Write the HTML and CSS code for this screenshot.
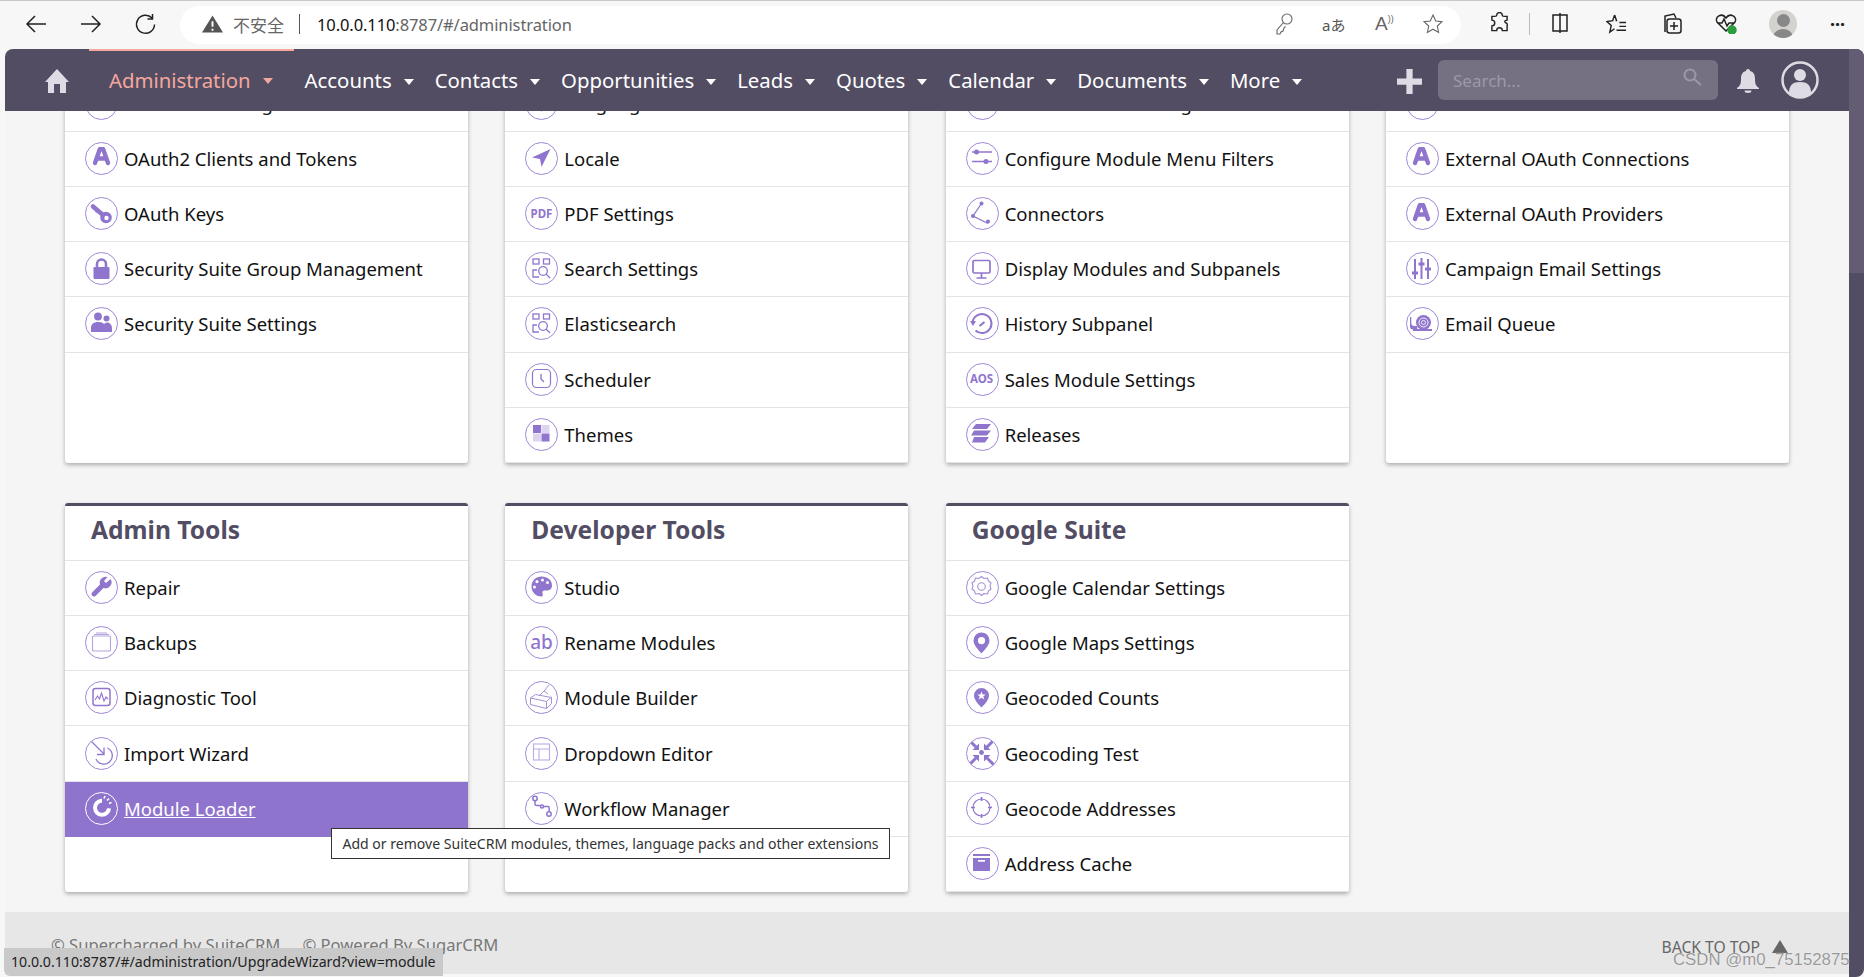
FILE: index.html
```html
<!DOCTYPE html>
<html lang="en">
<head>
<meta charset="utf-8">
<title>Administration</title>
<link rel="stylesheet" href="styles.css">
</head>
<body>
<svg class="defs" aria-hidden="true">
  <symbol id="i-a" viewBox="0 0 33 33"><path d="M10 22 14.800 8.200h3.400L23 22M12.500 17.500h8" fill="none" stroke="currentColor" stroke-width="4.400" stroke-linecap="round" stroke-linejoin="round"/></symbol>
  <symbol id="i-key" viewBox="0 0 33 33"><path d="M8 9.500 18 18" fill="none" stroke="currentColor" stroke-width="4.500" stroke-linecap="round"/><path d="M7 12.500h3.500v3h3v-3z" fill="currentColor"/><circle cx="21" cy="20.500" r="5.800" fill="currentColor"/><circle cx="21.500" cy="21" r="2.200" fill="#fff"/></symbol>
  <symbol id="i-lock" viewBox="0 0 33 33"><rect x="8.500" y="15" width="16" height="12" rx="1.200" fill="currentColor"/><path d="M12 16v-4a4.500 4.500 0 0 1 9 0v4" fill="none" stroke="currentColor" stroke-width="2.600"/></symbol>
  <symbol id="i-people" viewBox="0 0 33 33"><circle cx="13" cy="9.500" r="3.900" fill="currentColor"/><circle cx="21.500" cy="11.500" r="3" fill="currentColor"/><path d="M6 25v-4c0-4 3-6 7-6s5 1 6 2c1-1 2-1.500 3-1.500 3 0 5 2.500 5 5.500v4z" fill="currentColor"/></symbol>
  <symbol id="i-locale" viewBox="0 0 33 33"><path d="M25.500 8 7 16.500l8 1.500 1.500 8z" fill="currentColor"/></symbol>
  <symbol id="i-qr" viewBox="0 0 33 33"><g fill="none" stroke="currentColor" stroke-width="1.300"><rect x="8" y="7" width="6" height="5"/><rect x="18.500" y="7" width="6" height="5"/><path d="M14 25H8v-7h4"/><circle cx="18" cy="19" r="4.300"/><path d="m21 22 4 4"/></g></symbol>
  <symbol id="i-clock" viewBox="0 0 33 33"><g fill="none" stroke="currentColor" stroke-width="1.200"><rect x="7.500" y="7.500" width="18" height="18" rx="4"/><path d="M16 12v5l3 3" stroke-width="1.400"/></g></symbol>
  <symbol id="i-themes" viewBox="0 0 33 33"><path d="M8 8h8v8H8zM16.500 16.500h8v8h-8z" fill="currentColor"/><path d="M16.500 8h8v8h-8zM8 16.500h8v8H8z" fill="currentColor" opacity=".3"/></symbol>
  <symbol id="i-filter" viewBox="0 0 33 33"><g stroke="currentColor" stroke-width="1.500"><path d="M7 11h20M7 20.500h20"/></g><circle cx="11.500" cy="11" r="2.500" fill="currentColor"/><circle cx="21" cy="20.500" r="2.500" fill="currentColor"/></symbol>
  <symbol id="i-conn" viewBox="0 0 33 33"><path d="M16.500 6.500 8 19l15 7.500" fill="none" stroke="currentColor" stroke-width="1.300"/><circle cx="16.500" cy="6.500" r="2" fill="currentColor"/><circle cx="8" cy="19" r="2" fill="currentColor"/><circle cx="23" cy="24.500" r="2" fill="currentColor"/></symbol>
  <symbol id="i-monitor" viewBox="0 0 33 33"><g fill="none" stroke="currentColor" stroke-width="1.700"><rect x="8" y="8.500" width="17" height="12.500" rx="1.500"/><path d="M16.500 21v5M11.500 26h10"/></g></symbol>
  <symbol id="i-history" viewBox="0 0 33 33"><g fill="none" stroke="currentColor" stroke-width="2"><path d="M7.500 16a9.500 9.500 0 1 1 3 7.500"/><path d="m14.500 19 5-4" stroke-width="2.200"/></g><path d="M5 14h6l-3 5z" fill="currentColor"/></symbol>
  <symbol id="i-layers" viewBox="0 0 33 33"><path d="M11 7h15l-4 5H7zM9 13.500h17l-4 5H6zM9 20h15l-4 5.500H7z" fill="currentColor"/></symbol>
  <symbol id="i-wrench" viewBox="0 0 33 33"><path d="M25.500 9 21 13l-2-2 3.500-4a6 6 0 0 0-7.500 7.500L7 22.500a2.500 2.500 0 0 0 3.500 3.500l8-8A6 6 0 0 0 25.500 9z" fill="currentColor"/></symbol>
  <symbol id="i-backup" viewBox="0 0 33 33"><g fill="none" stroke="currentColor" stroke-width="1.100" opacity=".65"><rect x="7.500" y="10" width="18" height="15" rx="1"/><path d="M9 8.500h15M11 7h11"/></g></symbol>
  <symbol id="i-diag" viewBox="0 0 33 33"><g fill="none" stroke="currentColor"><rect x="8" y="7.500" width="17" height="17" rx="2.500" stroke-width="1.500"/><path d="m10 19 2.500-4 2 3 2-6 2.500 8 2-4 2 2" stroke-width="1.100"/></g></symbol>
  <symbol id="i-import" viewBox="0 0 33 33"><g fill="none" stroke="currentColor" stroke-width="1.300"><path d="m6 5 13 13"/><path d="M19 11.500v7h-7"/><path d="M22.500 12a8.500 8.500 0 1 1-11.500 11"/></g></symbol>
  <symbol id="i-loader" viewBox="0 0 33 33"><path d="M17 9.800a7 7 0 1 0 7 7.500" fill="none" stroke="currentColor" stroke-width="4"/><path d="M19 7.500l1-2.500M22 9.500l2-2M24 12.500l2.500-1" stroke="currentColor" stroke-width="1.600"/></symbol>
  <symbol id="i-palette" viewBox="0 0 33 33"><path fill-rule="evenodd" d="M16.500 6.500c6 0 10.500 3.500 10.500 9 0 4-3 5-5.500 5h-2c-1.500 0-2.500 1-2 2.500.5 1.500.5 3.500-1 3.500-6 0-10-4.500-10-10 0-6 4.500-10 10-10zM12 10a1.600 1.600 0 1 0 0 3.200 1.600 1.600 0 0 0 0-3.200zM17.500 8.500a1.500 1.500 0 1 0 0 3 1.500 1.500 0 0 0 0-3zM22.500 11a1.500 1.500 0 1 0 0 3 1.500 1.500 0 0 0 0-3zM9.500 15.500a1.500 1.500 0 1 0 0 3 1.500 1.500 0 0 0 0-3z" fill="currentColor"/></symbol>
  <symbol id="i-builder" viewBox="0 0 33 33"><g fill="none" stroke="currentColor" stroke-width="1" opacity=".8"><path d="M5.500 17v6.500l16 4 5-5v-6l-16-3zM5.500 17l16 3.500 5-4.500M21.500 20.500v7"/><path d="m14 15 5-5 4 3M19 10l5-6"/></g></symbol>
  <symbol id="i-table" viewBox="0 0 33 33"><g fill="none" stroke="currentColor" stroke-width="1.100" opacity=".6"><rect x="8.500" y="8" width="16" height="16"/><path d="M8.500 13h16M14 13v11"/></g></symbol>
  <symbol id="i-flow" viewBox="0 0 33 33"><g fill="none" stroke="currentColor" stroke-width="1.500"><circle cx="10" cy="7.500" r="2.200"/><circle cx="24" cy="23" r="2.200"/><circle cx="17" cy="15.500" r="1.500"/><path d="M10 10v3c0 1 .5 1.500 1.500 1.500h4M18.500 15.500H23c1 0 1.200.5 1.200 1.500v3.800"/></g></symbol>
  <symbol id="i-gear" viewBox="0 0 33 33"><g fill="none" stroke="currentColor" stroke-width="1.100" stroke-linejoin="round" opacity=".8"><path d="M16.500 6.500 19 8.500l3.500-.5 1 3 2.500 2-1 3 1 3-2.500 2-1 3-3.500-.5-2.500 2-2.500-2-3.500.5-1-3-2.500-2 1-3-1-3 2.500-2 1-3 3.500.5z"/><circle cx="16.500" cy="16.500" r="3.800"/></g></symbol>
  <symbol id="i-pin" viewBox="0 0 33 33"><path fill-rule="evenodd" d="M16.500 6.500a8 8 0 0 1 8 8c0 4.500-5 9.500-8 13-3-3.500-8-8.500-8-13a8 8 0 0 1 8-8zm0 4.500a3.600 3.600 0 1 0 0 7.200 3.600 3.600 0 0 0 0-7.200z" fill="currentColor"/></symbol>
  <symbol id="i-pinstar" viewBox="0 0 33 33"><path fill-rule="evenodd" d="M16.500 7a7.500 7.500 0 0 1 7.500 7.500c0 4-4.500 9-7.500 12-3-3-7.500-8-7.500-12A7.500 7.500 0 0 1 16.500 7zm0 3.500-1.200 3h-3l2.400 2-1 3 2.800-1.700 2.800 1.700-1-3 2.400-2h-3z" fill="currentColor"/></symbol>
  <symbol id="i-arrows" viewBox="0 0 33 33"><circle cx="16.500" cy="16.500" r="2.400" fill="currentColor"/><g stroke="currentColor" stroke-width="3"><path d="M4 4l7 7M29 4l-7 7M4 29l7-7M29 29l-7-7"/></g><g fill="currentColor"><path d="M14 14V7.500L7.500 14zM19 14v-6.500l6.500 6.500zM14 19v6.500L7.500 19zM19 19v6.500l6.500-6.500z"/></g></symbol>
  <symbol id="i-target" viewBox="0 0 33 33"><circle cx="16.500" cy="16.500" r="8.500" fill="none" stroke="currentColor" stroke-width="1.200"/><path d="M16.500 6v4M16.500 23v4M6 16.500h4M23 16.500h4" stroke="currentColor" stroke-width="1.600"/></symbol>
  <symbol id="i-archive" viewBox="0 0 33 33"><path d="M8 8h17v2H8zM8 12h17v13H8z" fill="currentColor"/><rect x="13" y="14" width="7" height="1.700" fill="#fff"/></symbol>
  <symbol id="i-sliders" viewBox="0 0 33 33"><g stroke="currentColor" stroke-width="2"><path d="M10 7v20M16.500 6v21M23 7v20"/><path d="M7 21h6M13.500 12h6M20 17h6" stroke-width="3"/></g></symbol>
  <symbol id="i-snail" viewBox="0 0 33 33"><path d="M5 10h1.300v6q0 3 3 3h3v3.500H8q-3 0-3-3zM8 22h19v2H8z" fill="currentColor"/><circle cx="18.500" cy="15.500" r="7.500" fill="currentColor"/><circle cx="18.500" cy="15.500" r="4.500" fill="none" stroke="#fff" stroke-width=".9"/><circle cx="18.500" cy="15.500" r="2" fill="none" stroke="#fff" stroke-width=".8"/></symbol>
  <symbol id="i-inbox" viewBox="0 0 33 33"><path d="M8 9h17v16H8z" fill="currentColor"/></symbol>
</svg>

<div class="app">
  <header class="browser">
    <svg class="tool tool-back" viewBox="0 0 22 20"><path d="M21 10H2M10 2l-8 8 8 8"/></svg>
    <svg class="tool tool-fwd" viewBox="0 0 22 20"><path d="M1 10h19M12 2l8 8-8 8"/></svg>
    <svg class="tool tool-reload" viewBox="0 0 22 22"><path d="M18 5a9 9 0 1 0 2.500 6.500M18.500 1v5h-5"/></svg>
    <div class="address">
      <svg class="warn" viewBox="0 0 22 18"><path d="M11 0 22 18H0z"/><path class="warn-mark" d="M11 6v6M11 14v2"/></svg>
      <span class="insecure">不安全</span>
      <span class="addr-sep"></span>
      <span class="url"><b>10.0.0.110</b>:8787/#/administration</span>
      <span class="addr-tools">
        <svg class="tool thin tool-key" viewBox="0 0 18 22"><circle cx="12" cy="6" r="5"/><path d="M8.500 9.500 2 17v4h3l1-2 2-1 1-3 1.500-1.500"/></svg>
        <span class="aa">aあ</span>
        <span class="ra">A<i>))</i></span>
        <svg class="tool thin tool-star" viewBox="0 0 22 22"><path d="m11 2 2.700 6 6.300.7-4.700 4.300 1.300 6.500L11 16.200 5.400 19.500 6.700 13 2 8.700 8.300 8z"/></svg>
      </span>
    </div>
    <div class="ext-tools">
      <svg class="tool ext-puzzle" viewBox="0 0 20 22"><path d="M7 3a3 3 0 0 1 6 0c0 1 2 1 5 1v4c-3 0-3 2-1 3s1 3 1 3v5h-5c0-2-1-3-3-3s-3 1-3 3H2v-5c2 0 3-1 3-3S4 8 2 8V4c3 0 5 0 5-1z"/></svg>
      <span class="ext-sep"></span>
      <svg class="tool ext-split" viewBox="0 0 20 20"><path d="M3 2h14v16H3zM10 0v20"/></svg>
      <svg class="tool ext-fav" viewBox="0 0 22 22"><path d="m9 2 2 6h-1M9 2 7 8 1 9l4.500 4L4 20l5-3.500M14 10h7M14 14h7M11 18h10"/></svg>
      <svg class="tool ext-coll" viewBox="0 0 22 22"><path d="M5 20V4l9-2 2 4"/><rect x="7" y="7" width="14" height="14" rx="2.500"/><path d="M14 10v8M10 14h8"/></svg>
      <svg class="tool ext-heart" viewBox="0 0 22 22"><path d="M11 19 2 10c-3-5 5-10 9-4 4-6 12-1 9 4zM2 11h5l2-4 3 7 2-3h6"/><circle class="ok" cx="17" cy="18" r="4"/></svg>
      <span class="profile"><span class="profile-head"></span><span class="profile-body"></span></span>
      <span class="dots">···</span>
    </div>
  </header>

  <div class="window">
    <div class="site">
      <nav class="topnav">
        <svg class="home" viewBox="0 0 24 24"><path d="M12 0 24 13h-3v11h-6v-9H9v9H3V13H0z"/></svg>
        <ul class="menu">
          <li class="menu-item active">Administration<span class="caret"></span></li>
          <li class="menu-item">Accounts<span class="caret"></span></li>
          <li class="menu-item">Contacts<span class="caret"></span></li>
          <li class="menu-item">Opportunities<span class="caret"></span></li>
          <li class="menu-item">Leads<span class="caret"></span></li>
          <li class="menu-item">Quotes<span class="caret"></span></li>
          <li class="menu-item">Calendar<span class="caret"></span></li>
          <li class="menu-item">Documents<span class="caret"></span></li>
          <li class="menu-item">More<span class="caret"></span></li>
        </ul>
        <svg class="plus" viewBox="0 0 24 24"><path d="M9 0h6v9h9v6h-9v9H9v-9H0V9h9z"/></svg>
        <div class="search">
          <span class="search-text">Search...</span>
          <svg class="search-icon" viewBox="0 0 21 18"><circle cx="7" cy="7" r="5.500"/><path d="m11 11 7 6"/></svg>
        </div>
        <svg class="bell" viewBox="0 0 24 24"><path d="M12 0c1.500 0 2 1 2 2 4 1 5 4 5 8 0 5 1 7 4 9v1H1v-1c3-2 4-4 4-9 0-4 1-7 5-8 0-1 .5-2 2-2zM8.500 21.500h7a3.500 2.500 0 0 1-7 0z"/></svg>
        <svg class="avatar" viewBox="0 0 38 38"><circle class="avatar-ring" cx="19" cy="19" r="17.500"/><circle cx="19" cy="14" r="6"/><path d="M8 32c0-8 4-11 11-11s11 3 11 11c-3 2.500-7 4-11 4s-8-1.500-11-4z"/></svg>
      </nav>

      <main class="main">
        <section class="grid">
          <article class="card">
            <ul class="rows">
              <li class="row"><span class="ring"><svg><use href="#i-a"/></svg></span>Password Management</li>
              <li class="row"><span class="ring"><svg><use href="#i-a"/></svg></span>OAuth2 Clients and Tokens</li>
              <li class="row"><span class="ring"><svg><use href="#i-key"/></svg></span>OAuth Keys</li>
              <li class="row"><span class="ring"><svg><use href="#i-lock"/></svg></span>Security Suite Group Management</li>
              <li class="row"><span class="ring"><svg><use href="#i-people"/></svg></span>Security Suite Settings</li>
            </ul>
          </article>
          <article class="card">
            <ul class="rows">
              <li class="row"><span class="ring"><svg><use href="#i-locale"/></svg></span>Languages</li>
              <li class="row"><span class="ring"><svg><use href="#i-locale"/></svg></span>Locale</li>
              <li class="row"><span class="ring"><svg viewBox="0 0 33 33"><text class="ring-text" x="16.500" y="20.500">PDF</text></svg></span>PDF Settings</li>
              <li class="row"><span class="ring"><svg><use href="#i-qr"/></svg></span>Search Settings</li>
              <li class="row"><span class="ring"><svg><use href="#i-qr"/></svg></span>Elasticsearch</li>
              <li class="row"><span class="ring"><svg><use href="#i-clock"/></svg></span>Scheduler</li>
              <li class="row"><span class="ring"><svg><use href="#i-themes"/></svg></span>Themes</li>
            </ul>
          </article>
          <article class="card">
            <ul class="rows">
              <li class="row"><span class="ring"><svg><use href="#i-filter"/></svg></span>Module Menu Settings</li>
              <li class="row"><span class="ring"><svg><use href="#i-filter"/></svg></span>Configure Module Menu Filters</li>
              <li class="row"><span class="ring"><svg><use href="#i-conn"/></svg></span>Connectors</li>
              <li class="row"><span class="ring"><svg><use href="#i-monitor"/></svg></span>Display Modules and Subpanels</li>
              <li class="row"><span class="ring"><svg><use href="#i-history"/></svg></span>History Subpanel</li>
              <li class="row"><span class="ring"><svg viewBox="0 0 33 33"><text class="ring-text" x="16.500" y="21">AOS</text></svg></span>Sales Module Settings</li>
              <li class="row"><span class="ring"><svg><use href="#i-layers"/></svg></span>Releases</li>
            </ul>
          </article>
          <article class="card">
            <ul class="rows">
              <li class="row"><span class="ring"><svg><use href="#i-inbox"/></svg></span>Inbound Email</li>
              <li class="row"><span class="ring"><svg><use href="#i-a"/></svg></span>External OAuth Connections</li>
              <li class="row"><span class="ring"><svg><use href="#i-a"/></svg></span>External OAuth Providers</li>
              <li class="row"><span class="ring"><svg><use href="#i-sliders"/></svg></span>Campaign Email Settings</li>
              <li class="row"><span class="ring"><svg><use href="#i-snail"/></svg></span>Email Queue</li>
            </ul>
          </article>

          <article class="card">
            <h2 class="card-title">Admin Tools</h2>
            <ul class="rows">
              <li class="row"><span class="ring"><svg><use href="#i-wrench"/></svg></span>Repair</li>
              <li class="row"><span class="ring"><svg><use href="#i-backup"/></svg></span>Backups</li>
              <li class="row"><span class="ring"><svg><use href="#i-diag"/></svg></span>Diagnostic Tool</li>
              <li class="row"><span class="ring"><svg><use href="#i-import"/></svg></span>Import Wizard</li>
              <li class="row row-hover"><span class="ring"><svg><use href="#i-loader"/></svg></span><a class="row-link" href="#">Module Loader</a></li>
            </ul>
          </article>
          <article class="card">
            <h2 class="card-title">Developer Tools</h2>
            <ul class="rows">
              <li class="row"><span class="ring"><svg><use href="#i-palette"/></svg></span>Studio</li>
              <li class="row"><span class="ring"><svg viewBox="0 0 33 33"><text class="ring-text ring-ab" x="16.500" y="22.500">ab</text></svg></span>Rename Modules</li>
              <li class="row"><span class="ring"><svg><use href="#i-builder"/></svg></span>Module Builder</li>
              <li class="row"><span class="ring"><svg><use href="#i-table"/></svg></span>Dropdown Editor</li>
              <li class="row"><span class="ring"><svg><use href="#i-flow"/></svg></span>Workflow Manager</li>
            </ul>
          </article>
          <article class="card">
            <h2 class="card-title">Google Suite</h2>
            <ul class="rows">
              <li class="row"><span class="ring"><svg><use href="#i-gear"/></svg></span>Google Calendar Settings</li>
              <li class="row"><span class="ring"><svg><use href="#i-pin"/></svg></span>Google Maps Settings</li>
              <li class="row"><span class="ring"><svg><use href="#i-pinstar"/></svg></span>Geocoded Counts</li>
              <li class="row"><span class="ring"><svg><use href="#i-arrows"/></svg></span>Geocoding Test</li>
              <li class="row"><span class="ring"><svg><use href="#i-target"/></svg></span>Geocode Addresses</li>
              <li class="row"><span class="ring"><svg><use href="#i-archive"/></svg></span>Address Cache</li>
            </ul>
          </article>
        </section>
        <footer class="footer">
          <div class="credits"><span>© Supercharged by SuiteCRM</span><span>© Powered By SugarCRM</span></div>
          <div class="back-top">BACK TO TOP<span class="back-arrow"></span></div>
        </footer>
      </main>
    </div>
    <div class="scrollbar"><div class="thumb"></div></div>
    <div class="tooltip">Add or remove SuiteCRM modules, themes, language packs and other extensions</div>
    <div class="statusbar">10.0.0.110:8787/#/administration/UpgradeWizard?view=module</div>
    <div class="watermark">CSDN @m0_75152875</div>
  </div>
</div>
</body>
</html>
```
FILE: styles.css
```css
* { box-sizing: border-box; }
html, body { margin: 0; padding: 0; height: 100%; overflow: hidden; }
body { font-family: "Noto Sans", "Noto Sans CJK SC", sans-serif; background: #f7f7f7; color: #111; }
ul { list-style: none; margin: 0; padding: 0; }
.defs { position: absolute; width: 0; height: 0; }
.app { display: flex; flex-direction: column; height: 977px; width: 1864px; }

/* browser chrome */
.browser { height: 49px; flex: none; display: flex; align-items: center; background: #f7f7f7; border-top: 1px solid #c9c9c9; padding: 0 16px 0 25px; position: relative; }
.tool { fill: none; stroke: #222; stroke-width: 1.500; flex: none; margin-top: -2px; }
.tool-back { width: 22px; height: 20px; }
.tool-fwd { width: 22px; height: 20px; margin-left: 33px; }
.tool-reload { width: 22px; height: 22px; margin-left: 32px; }
.address { width: 1281px; height: 38px; margin-left: 24px; background: #fff; border-radius: 19px; display: flex; align-items: center; padding: 0 17px 2px 22px; }
.warn { width: 21px; height: 18px; fill: #555; flex: none; }
.warn-mark { stroke: #fff; stroke-width: 2; fill: none; }
.insecure { margin-left: 10px; font-size: 17px; color: #666; }
.addr-sep { width: 1px; height: 20px; background: #555; margin: 0 17px 0 15px; }
.url { font-size: 16.500px; color: #666; letter-spacing: -.1px; }
.url b { font-weight: 400; color: #111; }
.addr-tools { margin-left: auto; display: flex; align-items: center; }
.thin { stroke: #666; stroke-width: 1.100; margin-top: 0; }
.tool-key { width: 18px; height: 22px; }
.aa { margin-left: 29px; font-size: 15px; color: #555; width: 24px; white-space: nowrap; }
.ra { margin-left: 29px; font-size: 19px; color: #666; width: 20px; font-family: "Liberation Sans", sans-serif; white-space: nowrap; }
.ra i { font-size: 9px; vertical-align: 8px; font-style: normal; }
.tool-star { width: 22px; height: 22px; margin-left: 27px; }
.ext-tools { display: flex; align-items: center; flex: none; margin-left: 29px; padding-bottom: 2px; }
.ext-puzzle { width: 19px; height: 22px; }
.ext-sep { width: 1px; height: 22px; background: #bbb; margin: 0 20px; }
.ext-split { width: 20px; height: 20px; }
.ext-fav { width: 21px; height: 21px; margin-left: 36px; }
.ext-coll { width: 22px; height: 22px; margin-left: 33px; }
.ext-heart { width: 22px; height: 22px; margin-left: 33px; }
.ok { fill: #2a9d3e; stroke: #2a9d3e; }
.profile { width: 28px; height: 28px; margin-left: 32px; border-radius: 50%; background: #d4d2ce; display: flex; flex-direction: column; align-items: center; overflow: hidden; flex: none; }
.profile-head { width: 13px; height: 13px; border-radius: 50%; background: #888; margin-top: 4px; flex: none; }
.profile-body { width: 22px; height: 14px; border-radius: 11px 11px 0 0; background: #888; margin-top: 2px; flex: none; }
.dots { margin-left: 33px; font-size: 18px; font-weight: 700; color: #222; letter-spacing: 0; }

/* window */
.window { flex: 1; display: flex; margin-left: 5px; min-height: 0; border-radius: 8px; overflow: hidden; }
.site { flex: 1; min-width: 0; display: flex; flex-direction: column; }
.scrollbar { width: 15px; flex: none; background: #534d64; }
.thumb { height: 224px; background: #635c72; }

/* top nav */
.topnav { height: 62px; flex: none; background: #534d64; display: flex; align-items: center; padding: 0 30px 0 40px; position: relative; z-index: 2; }
.home { width: 24px; height: 24px; fill: #dedbe4; flex: none; margin-top: 2px; }
.menu { display: flex; align-items: stretch; align-self: stretch; margin-left: 20px; }
.menu-item { display: flex; align-items: center; font-size: 20.350px; color: #fff; padding: 0 21px 0 0; white-space: nowrap; }
.menu-item.active { color: #f4a79d; border-top: 2.500px solid #f4a79d; padding: 0 21px 2.500px 20px; margin-right: 11px; }
.caret { width: 0; height: 0; border-left: 5.500px solid transparent; border-right: 5.500px solid transparent; border-top: 6px solid currentColor; margin-left: 12px; margin-top: 3px; }
.plus { width: 25px; height: 25px; fill: #dedbe4; flex: none; margin-left: auto; margin-top: 2px; }
.search { width: 280px; height: 40px; margin-left: 16.500px; background: #767083; border-radius: 6px; display: flex; align-items: center; justify-content: space-between; padding: 0 14px 0 15px; flex: none; }
.search-text { font-size: 17px; color: #9d98a8; }
.search-icon { width: 21px; height: 18px; fill: none; stroke: #9d98a8; stroke-width: 2; margin-top: -6px; }
.bell { width: 24px; height: 24px; fill: #dedbe4; flex: none; margin-left: 18px; margin-top: 2px; }
.avatar { width: 38px; height: 38px; fill: #dedbe4; flex: none; margin-left: 21px; }
.avatar-ring { fill: none; stroke: #dedbe4; stroke-width: 2.500; }

/* main */
.main { flex: 1; min-height: 0; overflow: hidden; background: #f5f5f5; display: flex; flex-direction: column; justify-content: flex-end; }
.grid { flex: none; display: grid; grid-template-columns: repeat(4, 403px); column-gap: 37.330px; row-gap: 40px; padding: 0 0 20px 60px; }
.card { background: #fff; border-radius: 3px; box-shadow: 0 2px 4px rgba(0,0,0,.3); }
.card-title { margin: 0; height: 58px; border-top: 3px solid #534d64; border-bottom: 1px solid #e3e3ea; border-radius: 3px 3px 0 0; padding: 6px 0 0 26px; font-size: 24.600px; line-height: 36px; font-weight: 700; color: #534d64; }
.row { height: 55.200px; border-bottom: 1px solid #e3e3ea; display: flex; align-items: center; padding: 0 0 1px 20px; font-size: 18.500px; color: #111; white-space: nowrap; }
.ring { width: 33px; height: 33px; border-radius: 50%; border: 1.500px solid #9f88d6; color: #9075ce; margin-right: 6px; flex: none; position: relative; overflow: hidden; }
.ring svg { position: absolute; left: -1.500px; top: -1.500px; width: 33px; height: 33px; }
.ring-text { font: 700 11.500px "Noto Sans", sans-serif; fill: #9075ce; text-anchor: middle; }
.ring-ab { font-size: 19px; font-weight: 500; }
.row-hover { background: #8f74cd; color: #fff; border-bottom-color: #8f74cd; }
.row-hover .ring { color: #fff; border-color: #fff; }
.row-link { color: #fff; text-decoration: underline; }

/* footer */
.footer { height: 65px; flex: none; background: linear-gradient(#e7e7e7 62px, #f7f7f7 62px); display: flex; justify-content: space-between; padding: 21px 61px 0 46px; font-size: 16.600px; color: #777; }
.credits { display: flex; gap: 22px; }
.back-top { display: flex; align-items: flex-start; font-size: 15.700px; line-height: 22px; margin-top: 3px; color: #666; }
.back-arrow { width: 0; height: 0; border-left: 8px solid transparent; border-right: 8px solid transparent; border-bottom: 13px solid #666; margin-left: 12px; margin-top: 4px; }

/* overlays */
.tooltip { position: absolute; left: 331px; top: 828px; width: 559px; height: 31px; background: #fff; border: 1.500px solid #333; font-size: 14.060px; line-height: 29px; color: #333; text-align: center; white-space: nowrap; z-index: 3; }
.statusbar { position: absolute; left: 4px; top: 948px; width: 439px; height: 28px; background: #c9c9c9; border-radius: 0 0 0 6px; padding-left: 7px; font-size: 14.150px; line-height: 28px; color: #222; white-space: nowrap; z-index: 3; }
.watermark { position: absolute; left: 1673px; top: 950px; font-family: "Liberation Sans", sans-serif; font-size: 16.800px; color: #999; text-shadow: 0 0 1px #fff; white-space: nowrap; z-index: 3; }
```
